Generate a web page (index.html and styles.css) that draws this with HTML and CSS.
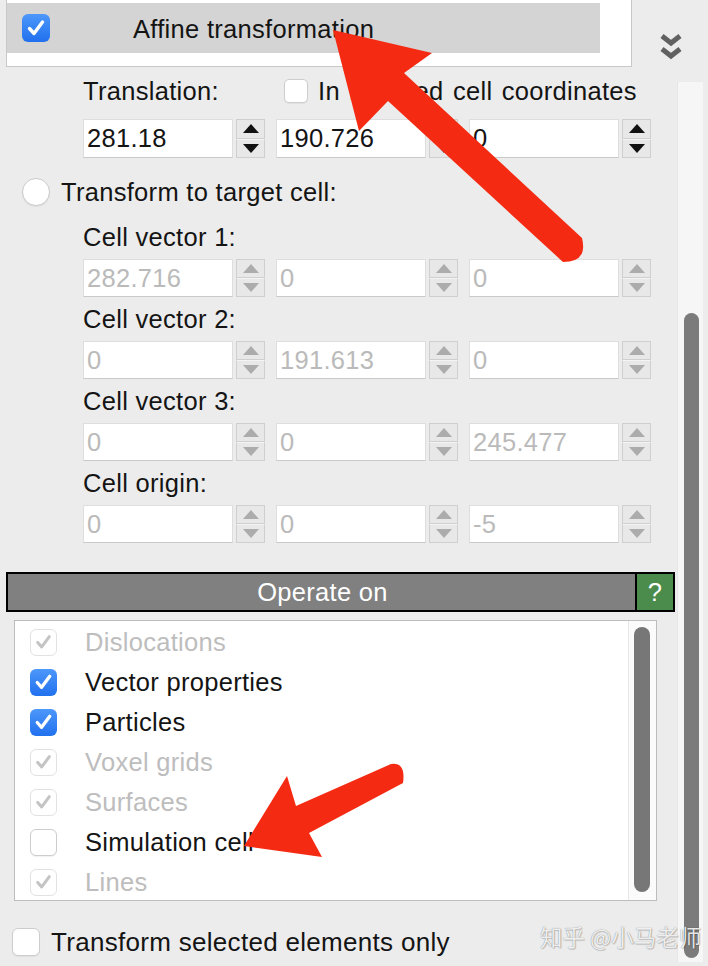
FILE: index.html
```html
<!DOCTYPE html>
<html>
<head>
<meta charset="utf-8">
<link rel="stylesheet" href="styles.css">
</head>
<body>
<div class="window">
  <div class="top">
    <div class="mod-list">
      <div class="mod-row">
        <span class="cb cb-on"><svg viewBox="0 0 28 28"><path d="M7.5 14.5 L12 19.5 L20.5 8"/></svg></span>
        <span class="mod-name">Affine transformation</span>
      </div>
    </div>
    <div class="chevron">
      <svg width="22" height="30" viewBox="0 0 22 30"><path d="M2 3 L11 10 L20 3 M2 16 L11 23 L20 16"/></svg>
    </div>
  </div>

  <div class="form">
    <div class="trans-row">
      <span class="trans-label">Translation:</span>
      <span class="cb cb-off small"></span>
      <span class="reduced">In reduced cell coordinates</span>
    </div>
    <div class="fields tall">
      <div class="spin"><div class="field">281.18</div><div class="btns"><span class="up"></span><span class="down"></span></div></div>
      <div class="spin"><div class="field">190.726</div><div class="btns"><span class="up"></span><span class="down"></span></div></div>
      <div class="spin"><div class="field">0</div><div class="btns"><span class="up"></span><span class="down"></span></div></div>
    </div>

    <div class="radio-row">
      <span class="radio"></span>
      <span>Transform to target cell:</span>
    </div>

    <div class="label first">Cell vector 1:</div>
    <div class="fields dis">
      <div class="spin"><div class="field">282.716</div><div class="btns"><span class="up"></span><span class="down"></span></div></div>
      <div class="spin"><div class="field">0</div><div class="btns"><span class="up"></span><span class="down"></span></div></div>
      <div class="spin"><div class="field">0</div><div class="btns"><span class="up"></span><span class="down"></span></div></div>
    </div>
    <div class="label">Cell vector 2:</div>
    <div class="fields dis">
      <div class="spin"><div class="field">0</div><div class="btns"><span class="up"></span><span class="down"></span></div></div>
      <div class="spin"><div class="field">191.613</div><div class="btns"><span class="up"></span><span class="down"></span></div></div>
      <div class="spin"><div class="field">0</div><div class="btns"><span class="up"></span><span class="down"></span></div></div>
    </div>
    <div class="label">Cell vector 3:</div>
    <div class="fields dis">
      <div class="spin"><div class="field">0</div><div class="btns"><span class="up"></span><span class="down"></span></div></div>
      <div class="spin"><div class="field">0</div><div class="btns"><span class="up"></span><span class="down"></span></div></div>
      <div class="spin"><div class="field">245.477</div><div class="btns"><span class="up"></span><span class="down"></span></div></div>
    </div>
    <div class="label">Cell origin:</div>
    <div class="fields dis">
      <div class="spin"><div class="field">0</div><div class="btns"><span class="up"></span><span class="down"></span></div></div>
      <div class="spin"><div class="field">0</div><div class="btns"><span class="up"></span><span class="down"></span></div></div>
      <div class="spin"><div class="field">-5</div><div class="btns"><span class="up"></span><span class="down"></span></div></div>
    </div>

    <div class="op-bar">
      <div class="op-title">Operate on</div>
      <div class="op-help">?</div>
    </div>

    <div class="op-list">
      <div class="op-items">
        <div class="item dis"><span class="cb cb-dis"><svg viewBox="0 0 28 28"><path d="M7.5 14.5 L12 19.5 L20.5 8"/></svg></span><span>Dislocations</span></div>
        <div class="item"><span class="cb cb-on"><svg viewBox="0 0 28 28"><path d="M7.5 14.5 L12 19.5 L20.5 8"/></svg></span><span>Vector properties</span></div>
        <div class="item"><span class="cb cb-on"><svg viewBox="0 0 28 28"><path d="M7.5 14.5 L12 19.5 L20.5 8"/></svg></span><span>Particles</span></div>
        <div class="item dis"><span class="cb cb-dis"><svg viewBox="0 0 28 28"><path d="M7.5 14.5 L12 19.5 L20.5 8"/></svg></span><span>Voxel grids</span></div>
        <div class="item dis"><span class="cb cb-dis"><svg viewBox="0 0 28 28"><path d="M7.5 14.5 L12 19.5 L20.5 8"/></svg></span><span>Surfaces</span></div>
        <div class="item"><span class="cb cb-off"></span><span>Simulation cell</span></div>
        <div class="item dis"><span class="cb cb-dis"><svg viewBox="0 0 28 28"><path d="M7.5 14.5 L12 19.5 L20.5 8"/></svg></span><span>Lines</span></div>
      </div>
      <div class="op-scroll"><div class="op-thumb"></div></div>
    </div>

    <div class="bottom-row">
      <span class="cb cb-off"></span>
      <span>Transform selected elements only</span>
    </div>
  </div>

  <div class="track"><div class="thumb"></div></div>
</div>

<div class="watermark">知乎 @小马老师</div>

<svg class="arrows" width="708" height="966" viewBox="0 0 708 966">
  <path d="M333 30 L432 53 L404 73 L582 238 Q588 262 563 262 L388 101 L359 131 Z"/>
  <path d="M244 846 L287 776 L296 806 L391 764 Q406 762 403 783 L309 833 L322 857 Z"/>
</svg>
</body>
</html>
```
FILE: styles.css
```css
* { box-sizing: border-box; margin: 0; padding: 0; }
html, body { width: 708px; height: 966px; overflow: hidden; }
body {
  background: #ececec;
  font-family: "Liberation Sans", Arial, sans-serif;
  font-size: 25.5px;
  letter-spacing: 0.3px;
  color: #141414;
  position: relative;
}

.window {
  display: grid;
  grid-template-columns: 677px 26px 5px;
  grid-template-rows: 74px 892px;
  width: 708px;
  height: 966px;
}

/* top modifier list */
.top { grid-column: 1 / 4; grid-row: 1; display: flex; align-items: flex-start; }
.mod-list {
  margin-left: 6px;
  width: 626px;
  height: 67px;
  background: #fff;
  border: 1px solid #c8c8c8;
  border-top: none;
  padding-top: 3px;
}
.mod-row {
  width: 593px;
  height: 50px;
  background: #d4d4d4;
  display: flex;
  align-items: center;
  padding-left: 15px;
}
.mod-name { margin-left: 83px; margin-top: 2px; }
.chevron { margin-left: 28px; margin-top: 33px; }
.chevron svg path { fill: none; stroke: #616161; stroke-width: 5; stroke-linejoin: miter; }

/* checkboxes */
.cb {
  width: 28px; height: 28px;
  border-radius: 6px;
  flex: none;
  display: flex; align-items: center; justify-content: center;
}
.cb svg { width: 28px; height: 28px; }
.cb svg path { fill: none; stroke-width: 3.4; stroke-linecap: round; stroke-linejoin: round; }
.cb-on { background: linear-gradient(#4c98fb, #2170ee); }
.cb-on svg path { stroke: #fff; }
.cb-off { background: #fff; border: 1px solid #cdcdcd; box-shadow: 0 1px 1px rgba(0,0,0,0.06); }
.cb-dis { background: #fff; border: 1px solid #e2e2e2; }
.cb-dis svg path { stroke: #c4c4c4; }
.cb.small { width: 24px; height: 24px; border-radius: 5px; }

/* form */
.form { grid-column: 1; grid-row: 2; display: flex; flex-direction: column; }
.trans-row { height: 34px; display: flex; align-items: center; padding-left: 83px; }
.trans-label { width: 201px; }
.reduced { margin-left: 10px; word-spacing: 2px; }

.fields { display: flex; gap: 11px; margin-left: 83px; height: 38px; margin-top: 5px; }
.fields.tall { height: 39px; margin-top: 11px; }
.spin { display: flex; gap: 3px; }
.field {
  width: 150px;
  background: #fff;
  border: 1px solid #dedede;
  border-bottom-color: #c9c9c9;
  padding-left: 3px;
  display: flex; align-items: center;
  font-size: 25.5px;
}
.btns { width: 29px; display: flex; flex-direction: column; }
.btns span {
  flex: 1;
  background: #e8e8e8;
  border: 1px solid #cfcfcf;
  display: flex; align-items: center; justify-content: center;
}
.btns span + span { border-top-color: #f4f4f4; }
.up::after {
  content: "";
  border-left: 8px solid transparent;
  border-right: 8px solid transparent;
  border-bottom: 9px solid #111;
}
.down::after {
  content: "";
  border-left: 8px solid transparent;
  border-right: 8px solid transparent;
  border-top: 9px solid #111;
}
.dis .field { color: #bababa; }
.dis .up::after { border-bottom-color: #acacac; }
.dis .down::after { border-top-color: #acacac; }

.radio-row { margin-top: 17px; height: 34px; display: flex; align-items: center; padding-left: 22px; gap: 11px; }
.radio {
  width: 28px; height: 28px; border-radius: 50%;
  background: #fff; border: 1px solid #cacaca;
  box-shadow: 0 1px 1px rgba(0,0,0,0.06);
}

.label { height: 34px; display: flex; align-items: center; padding-left: 83px; margin-top: 5px; }
.label.first { margin-top: 11px; }

/* operate on */
.op-bar {
  margin-top: 29px;
  margin-left: 6px;
  width: 669px;
  height: 40px;
  border: 2px solid #000;
  background: #808080;
  display: flex;
  color: #fff;
}
.op-title { flex: 1; display: flex; align-items: center; justify-content: center; padding-left: 2px; }
.op-help {
  width: 38px;
  background: #4b8b4b;
  border-left: 2px solid #000;
  display: flex; align-items: center; justify-content: center;
}

.op-list {
  margin-top: 8px;
  margin-left: 14px;
  width: 643px;
  height: 281px;
  background: #fff;
  border: 1px solid #bdbdbd;
  display: flex;
  overflow: hidden;
}
.op-items { flex: 1; padding-top: 1px; }
.item { height: 40px; display: flex; align-items: center; padding-left: 15px; gap: 28px; }
.item .cb { width: 27px; height: 27px; }
.item.dis { color: #bdbdbd; }
.op-scroll { width: 28px; border-left: 1px solid #e8e8e8; background: #fbfbfb; padding-left: 5px; }
.op-thumb { width: 16px; height: 265px; margin-top: 6px; border-radius: 8px; background: #777; }

.bottom-row { margin-top: 24px; height: 34px; display: flex; align-items: center; padding-left: 12px; gap: 11px; font-size: 26px; }

/* outer scrollbar */
.track {
  grid-column: 2; grid-row: 2;
  margin-top: 8px; margin-bottom: 4px;
  background: #f6f6f6;
  border-left: 1px solid #e6e6e6;
  padding-left: 6px;
}
.thumb { width: 15px; height: 645px; margin-top: 231px; border-radius: 8px; background: #7b7b7b; }

/* overlays */
.watermark {
  position: absolute;
  left: 540px; top: 920px;
  font-family: "Noto Sans CJK SC", sans-serif;
  font-size: 22.5px;
  letter-spacing: 0;
  color: rgba(255,255,255,0.88);
  text-shadow: 0 0 1px rgba(0,0,0,0.5), 1px 1px 1px rgba(0,0,0,0.15);
  white-space: nowrap;
}
.arrows { position: absolute; left: 0; top: 0; pointer-events: none; }
.arrows path { fill: #f52a12; }
```
